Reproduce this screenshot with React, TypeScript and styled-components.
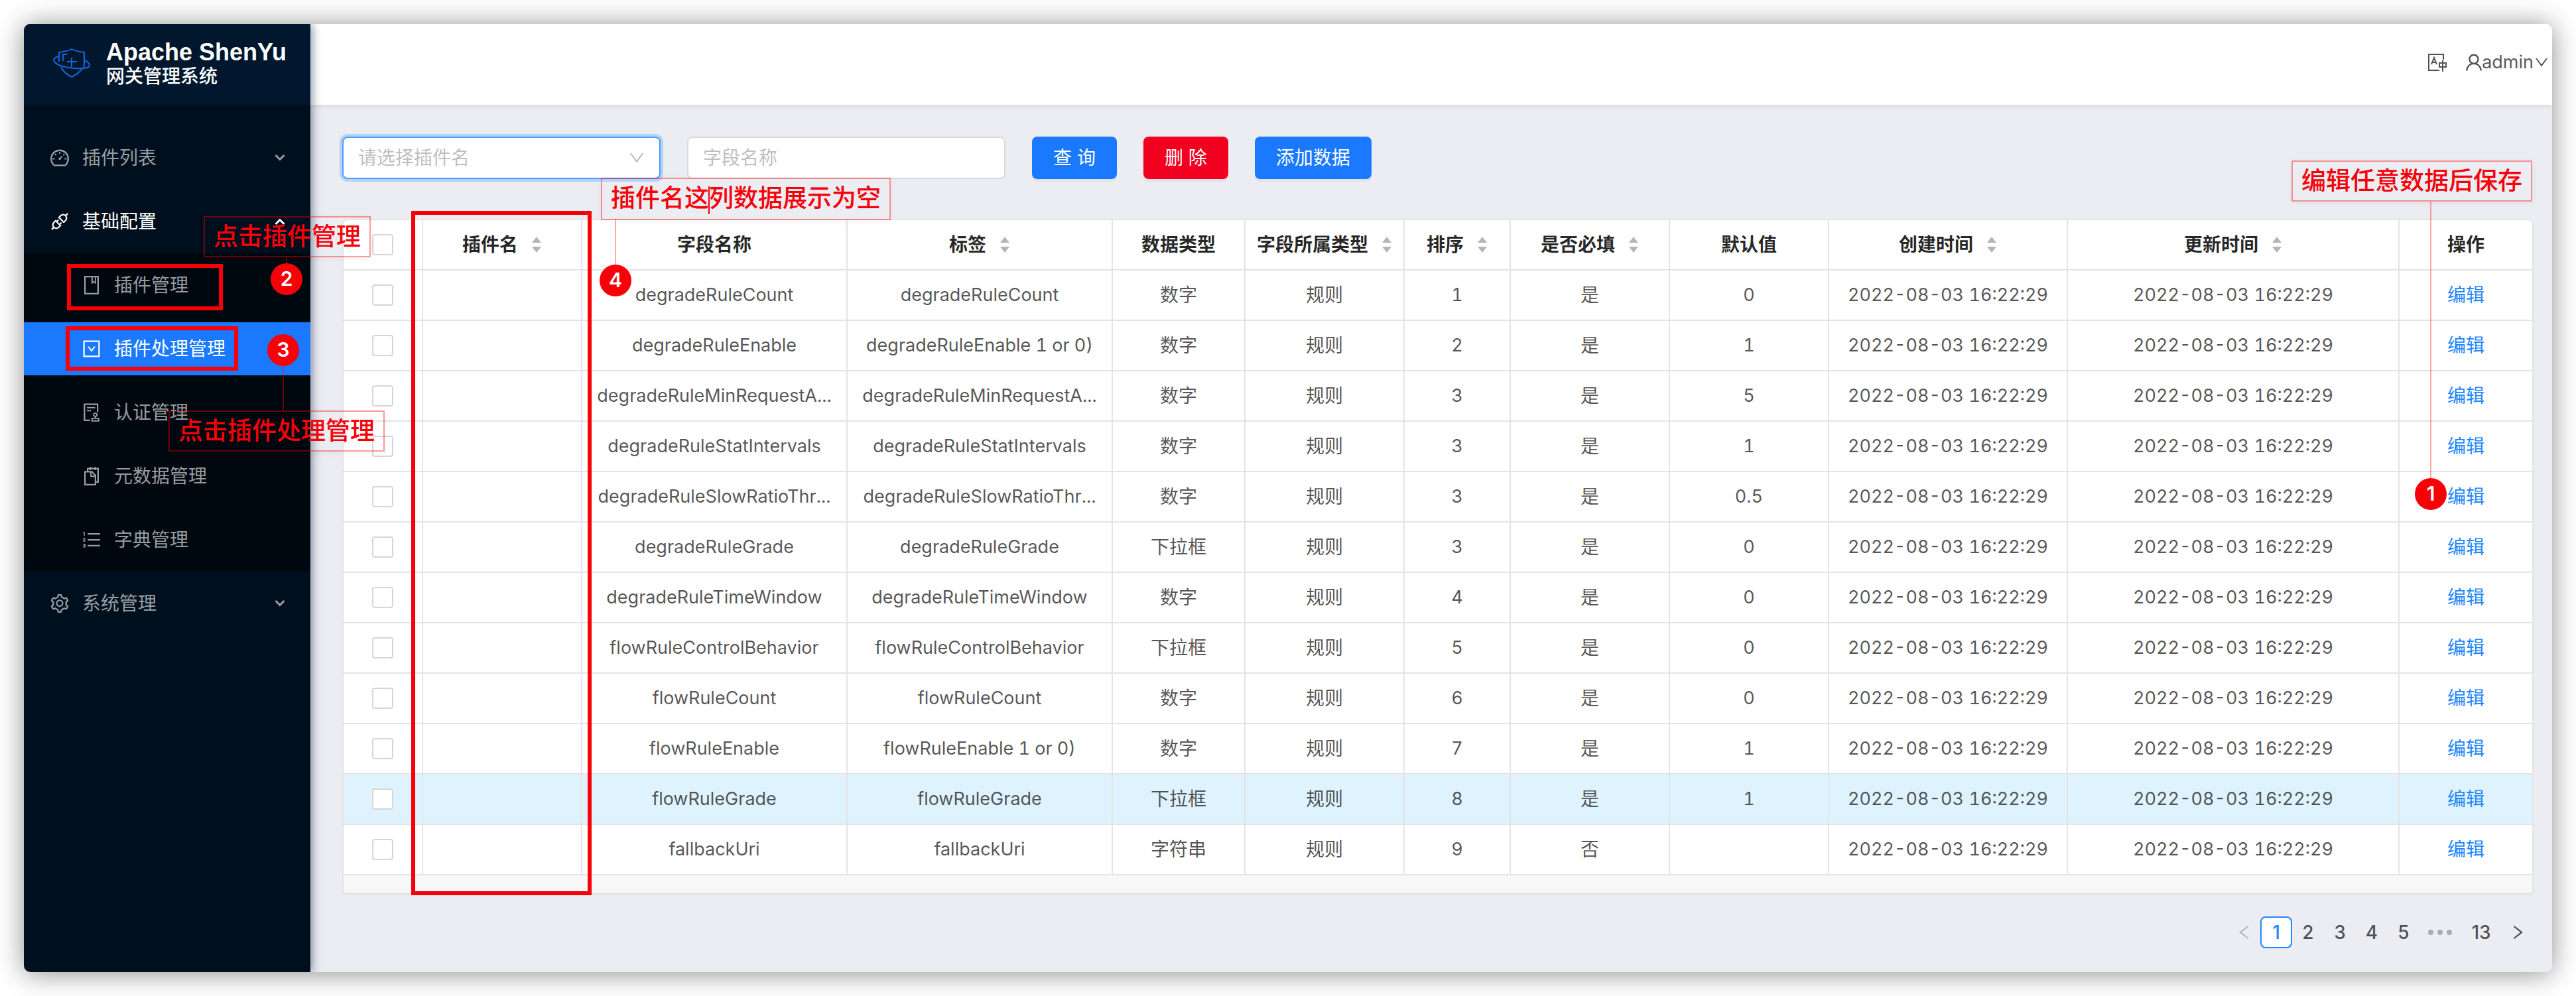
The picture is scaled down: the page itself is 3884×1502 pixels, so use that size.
import React from "react";
import styled, { createGlobalStyle } from "styled-components";
import {
  AiOutlineApi, AiOutlineAudit, AiOutlineBook, AiOutlineDashboard, AiOutlineDown, AiOutlineDownSquare,
  AiOutlineLeft, AiOutlineOrderedList, AiOutlineRight, AiOutlineSetting, AiOutlineSnippets, AiOutlineUser,
} from "react-icons/ai";

const Global = createGlobalStyle`
  *, *::before, *::after { box-sizing: border-box; }
  body {
    margin: 0;
    background: #fff;
    color: rgba(0, 0, 0, 0.68);
    font-family: Inter, "Noto Sans CJK SC", sans-serif;
    font-size: 28px;
    line-height: 42px;
  }
  button, input, select { font: inherit; color: inherit; }
`;

const Desktop = styled.div`
  position: relative;
  min-height: 100vh;
  padding: 36px;
  display: flex;
  overflow: hidden;
`;

const Window = styled.div`
  flex: 1;
  min-width: 0;
  display: flex;
  border-radius: 10px;
  overflow: hidden;
  background: #ebedf2;
`;

const WindowShadow = styled.div`
  flex: 1;
  min-width: 0;
  display: flex;
  border-radius: 10px;
  box-shadow: 0 2px 40px rgba(0, 0, 0, 0.45);
`;

const Sidebar = styled.aside`
  position: relative;
  z-index: 1;
  flex: none;
  width: 432px;
  background: #000f1d;
  box-shadow: 4px 0 12px rgba(0, 21, 61, 0.4);
`;

const Brand = styled.div`
  display: flex;
  align-items: center;
  gap: 24px;
  height: 122px;
  padding: 0 0 4px 44px;
  background: #00172e;
  color: #fff;
`;

const BrandName = styled.h1`
  margin: 0;
  font: bold 36px/40px "Liberation Sans", Arial, sans-serif;
`;

const BrandSub = styled.div`
  font-size: 28px;
  line-height: 32px;
  font-weight: 500;
`;

const Menu = styled.ul<{ $sub?: boolean }>`
  list-style: none;
  margin: 0;
  padding: ${(p) => (p.$sub ? "0" : "32px 0 0")};
  background: ${(p) => (p.$sub ? "#00080f" : "transparent")};
`;

const MenuLink = styled.a<{ $level: number; $active?: boolean; $open?: boolean }>`
  display: flex;
  align-items: center;
  gap: 18px;
  height: 80px;
  margin: 8px 0;
  padding: 0 38px 0 ${(p) => (p.$level === 2 ? "86px" : "38px")};
  background: ${(p) => (p.$active ? "#1a79ff" : "transparent")};
  color: ${(p) => (p.$active || p.$open ? "#fff" : "rgba(255, 255, 255, 0.6)")};
  text-decoration: none;
`;

const MenuItem = styled.li`
  display: flow-root;
`;

const MenuText = styled.span`
  flex: 1;
`;

const Main = styled.div`
  flex: 1;
  min-width: 0;
`;

const TopBar = styled.header`
  display: flex;
  justify-content: flex-end;
  align-items: center;
  gap: 24px;
  height: 122px;
  padding: 0 4px 6px 0;
  background: #fff;
  box-shadow: 0 2px 8px rgba(0, 21, 41, 0.1);
`;

const HeaderButton = styled.button`
  display: flex;
  align-items: center;
  padding: 0;
  border: 0;
  background: none;
  font-size: 27px;
`;

const UserName = styled.span`
  margin-left: -4px;
`;

const Content = styled.main`
  padding: 48px 28px 36px 48px;
`;

const Toolbar = styled.form`
  display: flex;
  gap: 40px;
  margin-bottom: 60px;
`;

const SelectBox = styled.div`
  position: relative;
  width: 480px;
  height: 64px;
`;

const PluginSelect = styled.select`
  appearance: none;
  width: 100%;
  height: 100%;
  padding: 0 22px;
  border: 2px solid #479fff;
  border-radius: 8px;
  outline: none;
  background: #fff;
  color: #bfbfbf;
  box-shadow: 0 0 0 4px rgba(24, 134, 255, 0.25);
`;

const SelectArrow = styled.span`
  position: absolute;
  top: 18px;
  right: 22px;
  display: flex;
  color: #bfbfbf;
  pointer-events: none;
`;

const FieldInput = styled.input`
  width: 480px;
  height: 64px;
  padding: 0 22px;
  border: 2px solid #d9d9d9;
  border-radius: 8px;
  background: #fff;
  &::placeholder { color: #bfbfbf; opacity: 1; }
`;

const ActionButton = styled.button<{ $danger?: boolean }>`
  height: 64px;
  padding: 0 32px;
  border: 0;
  border-radius: 8px;
  background: ${(p) => (p.$danger ? "#f2001f" : "#1a79ff")};
  color: #fff;
  box-shadow: 0 4px 0 rgba(0, 0, 0, 0.04);
`;

const TableFrame = styled.div`
  border: 2px solid #e4e4e4;
  border-radius: 8px 8px 4px 4px;
  background: #fff;
  overflow: hidden;
`;

const DataTable = styled.table`
  width: 100%;
  table-layout: fixed;
  border-collapse: separate;
  border-spacing: 0;
  text-align: center;
  font-variant-numeric: tabular-nums;
`;

const Cell = styled.td<{ $latin?: boolean }>`
  height: 76px;
  padding: 0 4px;
  border-right: 2px solid #e4e4e4;
  border-bottom: 2px solid #e4e4e4;
  font-size: ${(p) => (p.$latin ? "27px" : "28px")};
  white-space: nowrap;
  &:last-child { border-right: 0; }
`;

const HeadCell = styled(Cell).attrs({ as: "th", scope: "col" })`
  color: rgba(0, 0, 0, 0.85);
  font-weight: 700;
`;

const Row = styled.tr<{ $hover?: boolean }>`
  background: ${(p) => (p.$hover ? "#dff3fe" : "#fff")};
`;

const HeadLabel = styled.span`
  display: inline-flex;
  align-items: center;
  gap: 20px;
`;

const Sorter = styled.svg`
  width: 16px;
  height: 24px;
  fill: #b5b5b5;
`;

const Check = styled.input.attrs({ type: "checkbox" })`
  appearance: none;
  display: block;
  width: 32px;
  height: 32px;
  margin: 0 auto;
  border: 2px solid #d6d6d6;
  border-radius: 4px;
  background: #fff;
`;

const EditLink = styled.a`
  color: #1f87ff;
  text-decoration: none;
`;

const TableFoot = styled.div`
  height: 28px;
  border-bottom: 2px solid #e6e6e6;
  background: #f8f8f8;
`;

const Pager = styled.nav`
  display: flex;
  justify-content: flex-end;
  margin-top: 32px;
`;

const PageButton = styled.button<{ $active?: boolean; $wide?: boolean; $muted?: boolean }>`
  display: flex;
  align-items: center;
  justify-content: center;
  width: ${(p) => (p.$wide ? "62px" : "48px")};
  height: 48px;
  padding: 0;
  border: 2px solid ${(p) => (p.$active ? "#1f87ff" : "transparent")};
  border-radius: 8px;
  background: ${(p) => (p.$active ? "#fff" : "none")};
  color: ${(p) => (p.$active ? "#1f87ff" : p.$muted ? "#b5b7bb" : "inherit")};
  font-weight: 500;
`;

/* Review marks that float above the page */
const Frame = styled.div<{ $x: number; $y: number; $w: number; $h: number }>`
  position: absolute;
  z-index: 2;
  left: ${(p) => p.$x}px;
  top: ${(p) => p.$y}px;
  width: ${(p) => p.$w}px;
  height: ${(p) => p.$h}px;
  border: 6px solid #f80008;
  pointer-events: none;
`;

const Note = styled.div<{ $x: number; $y: number }>`
  position: absolute;
  z-index: 3;
  left: ${(p) => p.$x}px;
  top: ${(p) => p.$y}px;
  padding: 9px 13px;
  border: 2px solid rgba(255, 0, 0, 0.4);
  box-shadow: 0 2px 10px rgba(0, 0, 0, 0.05);
  color: #f80008;
  font-size: 37px;
  line-height: 40px;
  font-weight: 500;
  white-space: nowrap;
`;

const Caret = styled.span`
  display: inline-block;
  width: 2px;
  height: 42px;
  margin: -2px -1px;
  vertical-align: middle;
  background: #f80008;
`;

const Leader = styled.div<{ $x: number; $y: number; $h: number }>`
  position: absolute;
  z-index: 3;
  left: ${(p) => p.$x}px;
  top: ${(p) => p.$y}px;
  width: 2px;
  height: ${(p) => p.$h}px;
  background: rgba(255, 0, 0, 0.35);
`;

const Marker = styled.div<{ $x: number; $y: number }>`
  position: absolute;
  z-index: 4;
  left: ${(p) => p.$x}px;
  top: ${(p) => p.$y}px;
  width: 48px;
  height: 48px;
  border-radius: 50%;
  background: #f80008;
  color: #fff;
  font-size: 30px;
  line-height: 46px;
  font-weight: 600;
  text-align: center;
`;

const Chevron = ({ up }: { up?: boolean }) => (
  <svg width="16" height="12" viewBox="0 0 16 12" fill="none" stroke="currentColor" strokeWidth="3">
    <path d={up ? "M1.500 10 8 3.500l6.500 6.500" : "M1.500 2 8 8.500l6.500-6.500"} />
  </svg>
);

const SortArrows = () => (
  <Sorter viewBox="0 0 16 24" aria-hidden="true">
    <path d="M8 0l7 9H1zM1 15h14l-7 9z" />
  </Sorter>
);

const Logo = () => (
  <svg width="56" height="44" viewBox="0 0 56 44" fill="none" stroke="#1667dd" strokeWidth="2">
    <path d="M9 20V6c7-1 14-2 19-5 5 3 12 4 19 5v17c0 2 0 4-1 6M12 28c3 7 8 11 16 15 8-4 13-8 16-13" />
    <path d="M9 12c-5 1-8 3-8 6 1 4 8 8 18 10 9 2 18 3 26 2 6 0 10-2 10-4 0-3-3-6-8-8" />
    <path d="M15 19V9h6M28 14v14M21 20h15" />
  </svg>
);

const LangIcon = () => (
  <svg width="30" height="28" viewBox="0 0 30 28" fill="none" stroke="currentColor" strokeWidth="2">
    <path d="M24 10V2H2v24h16M6 17l4-10 4 10M7 14h6" />
    <path d="M18 15h10v6H18zM23 11v17" />
  </svg>
);

const subMenu = [
  { text: "插件管理", icon: AiOutlineBook },
  { text: "插件处理管理", icon: AiOutlineDownSquare, active: true },
  { text: "认证管理", icon: AiOutlineAudit },
  { text: "元数据管理", icon: AiOutlineSnippets },
  { text: "字典管理", icon: AiOutlineOrderedList },
];

const widths = [120, 240, 400, 400, 200, 240, 160, 240, 240, 360, 500, 200];
const totalWidth = widths.reduce((a, b) => a + b, 0);

const heads: [string, boolean][] = [
  ["插件名", true], ["字段名称", false], ["标签", true], ["数据类型", false], ["字段所属类型", true], ["排序", true],
  ["是否必填", true], ["默认值", false], ["创建时间", true], ["更新时间", true], ["操作", false],
];

const time = "2022-08-03 16:22:29";

const rows: string[][] = [
  ["degradeRuleCount", "degradeRuleCount", "数字", "1", "是", "0"],
  ["degradeRuleEnable", "degradeRuleEnable 1 or 0)", "数字", "2", "是", "1"],
  ["degradeRuleMinRequestA...", "degradeRuleMinRequestA...", "数字", "3", "是", "5"],
  ["degradeRuleStatIntervals", "degradeRuleStatIntervals", "数字", "3", "是", "1"],
  ["degradeRuleSlowRatioThr...", "degradeRuleSlowRatioThr...", "数字", "3", "是", "0.5"],
  ["degradeRuleGrade", "degradeRuleGrade", "下拉框", "3", "是", "0"],
  ["degradeRuleTimeWindow", "degradeRuleTimeWindow", "数字", "4", "是", "0"],
  ["flowRuleControlBehavior", "flowRuleControlBehavior", "下拉框", "5", "是", "0"],
  ["flowRuleCount", "flowRuleCount", "数字", "6", "是", "0"],
  ["flowRuleEnable", "flowRuleEnable 1 or 0)", "数字", "7", "是", "1"],
  ["flowRuleGrade", "flowRuleGrade", "下拉框", "8", "是", "1"],
  ["fallbackUri", "fallbackUri", "字符串", "9", "否", ""],
];

export default function App() {
  return (
    <Desktop>
      <Global />
      <WindowShadow>
        <Window>
          <Sidebar>
            <Brand>
              <Logo />
              <div>
                <BrandName>Apache ShenYu</BrandName>
                <BrandSub>网关管理系统</BrandSub>
              </div>
            </Brand>
            <Menu>
              <MenuItem>
                <MenuLink href="#plugins" $level={1}>
                  <AiOutlineDashboard size={32} />
                  <MenuText>插件列表</MenuText>
                  <Chevron />
                </MenuLink>
              </MenuItem>
              <MenuItem>
                <MenuLink href="#config" $level={1} $open>
                  <AiOutlineApi size={32} />
                  <MenuText>基础配置</MenuText>
                  <Chevron up />
                </MenuLink>
                <Menu $sub>
                  {subMenu.map(({ text, icon: Icon, active }) => (
                    <MenuItem key={text}>
                      <MenuLink href="#item" $level={2} $active={active}>
                        <Icon size={32} />
                        <MenuText>{text}</MenuText>
                      </MenuLink>
                    </MenuItem>
                  ))}
                </Menu>
              </MenuItem>
              <MenuItem>
                <MenuLink href="#system" $level={1}>
                  <AiOutlineSetting size={32} />
                  <MenuText>系统管理</MenuText>
                  <Chevron />
                </MenuLink>
              </MenuItem>
            </Menu>
          </Sidebar>
          <Main>
            <TopBar>
              <HeaderButton aria-label="Language"><LangIcon /></HeaderButton>
              <HeaderButton>
                <AiOutlineUser size={32} />
                <UserName>admin</UserName>
                <AiOutlineDown size={24} />
              </HeaderButton>
            </TopBar>
            <Content>
              <Toolbar onSubmit={(e) => e.preventDefault()}>
                <SelectBox>
                  <PluginSelect aria-label="插件名" defaultValue="">
                    <option value="">请选择插件名</option>
                  </PluginSelect>
                  <SelectArrow><AiOutlineDown size={28} /></SelectArrow>
                </SelectBox>
                <FieldInput aria-label="字段名称" placeholder="字段名称" />
                <ActionButton type="submit">查 询</ActionButton>
                <ActionButton type="button" $danger>删 除</ActionButton>
                <ActionButton type="button">添加数据</ActionButton>
              </Toolbar>
              <TableFrame>
                <DataTable>
                  <colgroup>
                    {widths.map((w, i) => (
                      <col key={i} style={{ width: `${(w / totalWidth) * 100}%` }} />
                    ))}
                  </colgroup>
                  <thead>
                    <Row>
                      <HeadCell><Check aria-label="全选" /></HeadCell>
                      {heads.map(([text, sortable]) => (
                        <HeadCell key={text}>
                          {sortable ? <HeadLabel>{text}<SortArrows /></HeadLabel> : text}
                        </HeadCell>
                      ))}
                    </Row>
                  </thead>
                  <tbody>
                    {rows.map(([field, label, type, order, required, value]) => (
                      <Row key={field} $hover={field === "flowRuleGrade"}>
                        <Cell><Check aria-label={field} /></Cell>
                        <Cell />
                        <Cell $latin>{field}</Cell>
                        <Cell $latin>{label}</Cell>
                        <Cell>{type}</Cell>
                        <Cell>规则</Cell>
                        <Cell $latin>{order}</Cell>
                        <Cell>{required}</Cell>
                        <Cell $latin>{value}</Cell>
                        <Cell $latin>{time}</Cell>
                        <Cell $latin>{time}</Cell>
                        <Cell><EditLink href="#edit">编辑</EditLink></Cell>
                      </Row>
                    ))}
                  </tbody>
                </DataTable>
                <TableFoot />
              </TableFrame>
              <Pager aria-label="pagination">
                <PageButton $muted aria-label="previous"><AiOutlineLeft size={28} /></PageButton>
                <PageButton $active>1</PageButton>
                <PageButton>2</PageButton>
                <PageButton>3</PageButton>
                <PageButton>4</PageButton>
                <PageButton>5</PageButton>
                <PageButton $wide $muted aria-label="more">
                  <svg width="36" height="8" viewBox="0 0 36 8" fill="#a9abb0">
                    <circle cx="4" cy="4" r="4" /><circle cx="18" cy="4" r="4" /><circle cx="32" cy="4" r="4" />
                  </svg>
                </PageButton>
                <PageButton $wide>13</PageButton>
                <PageButton aria-label="next"><AiOutlineRight size={28} /></PageButton>
              </Pager>
            </Content>
          </Main>
        </Window>
      </WindowShadow>

      <Frame $x={101} $y={398} $w={235} $h={70} />
      <Frame $x={99} $y={492} $w={260} $h={67} />
      <Frame $x={620} $y={318} $w={272} $h={1032} />

      <Note $x={307} $y={326}>点击插件管理</Note>
      <Leader $x={431} $y={388} $h={12} />
      <Marker $x={408} $y={397}>2</Marker>

      <Note $x={254} $y={619}>点击插件处理管理</Note>
      <Leader $x={426} $y={550} $h={69} />
      <Marker $x={403} $y={504}>3</Marker>

      <Note $x={906} $y={268}>插件名这<Caret />列数据展示为空</Note>
      <Leader $x={927} $y={330} $h={70} />
      <Marker $x={904} $y={399}>4</Marker>

      <Note $x={3455} $y={242}>编辑任意数据后保存</Note>
      <Leader $x={3664} $y={304} $h={418} />
      <Marker $x={3641} $y={721}>1</Marker>
    </Desktop>
  );
}
